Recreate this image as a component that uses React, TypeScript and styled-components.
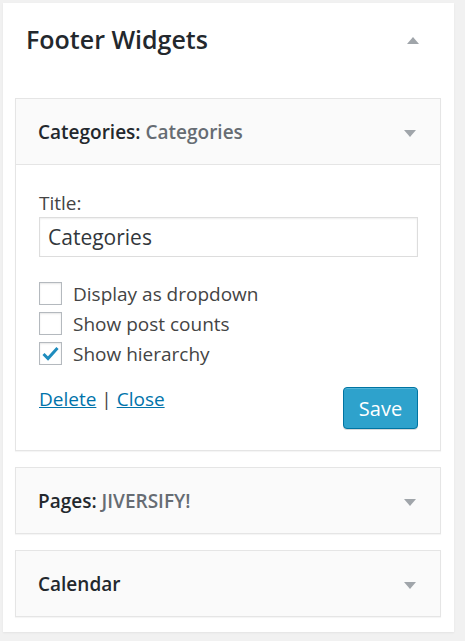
import React from "react";
import styled, { createGlobalStyle } from "styled-components";

const GlobalStyle = createGlobalStyle`
  body {
    margin: 0;
    background: #f1f1f1;
    font-family: "Open Sans", "Liberation Sans", sans-serif;
    color: #444;
  }
`;

type WidgetProps = {
  name: string;
  subtitle?: string;
  open?: boolean;
};

const Arrow = ({ up }: { up?: boolean }) => (
  <ArrowIcon width="12" height="7" viewBox="0 0 12 7">
    <path d={up ? "M0 7 L6 0 L12 7 Z" : "M0 0 L12 0 L6 7 Z"} fill="#a0a5aa" />
  </ArrowIcon>
);

const Check = ({ checked, label }: { checked?: boolean; label: string }) => (
  <CheckRow>
    <Box>
      {checked && (
        <svg width="17" height="15" viewBox="0 0 17 15">
          <path
            d="M1.5 8 L6 12.5 L15.5 2"
            fill="none"
            stroke="#1e8cbe"
            strokeWidth="3"
            strokeLinejoin="miter"
          />
        </svg>
      )}
    </Box>
    <CheckLabel>{label}</CheckLabel>
  </CheckRow>
);

const Widget = ({ name, subtitle, open }: WidgetProps) => (
  <WidgetCard>
    <WidgetTop>
      <WidgetTitle>
        {name}
        {subtitle && <Sub> {subtitle}</Sub>}
      </WidgetTitle>
      <Arrow />
    </WidgetTop>
    {open && (
      <WidgetBody>
        <Label>Title:</Label>
        <Input defaultValue="Categories" />
        <Checks>
          <Check label="Display as dropdown" />
          <Check label="Show post counts" />
          <Check checked label="Show hierarchy" />
        </Checks>
        <Actions>
          <Links>
            <Link href="#">Delete</Link> | <Link href="#">Close</Link>
          </Links>
          <SaveButton>Save</SaveButton>
        </Actions>
      </WidgetBody>
    )}
  </WidgetCard>
);

export default function App() {
  return (
    <>
      <GlobalStyle />
      <Panel>
        <PanelHeader>
          <PanelTitle>Footer Widgets</PanelTitle>
          <Arrow up />
        </PanelHeader>
        <WidgetList>
          <Widget name="Categories:" subtitle="Categories" open />
          <Widget name="Pages:" subtitle="JIVERSIFY!" />
          <Widget name="Calendar" />
        </WidgetList>
      </Panel>
    </>
  );
}

const Panel = styled.div`
  margin: 3px;
  width: 451px;
  height: 629px;
  box-sizing: border-box;
  background: #fff;
  box-shadow: 0 1px 2px rgba(0, 0, 0, 0.06);
`;

const PanelHeader = styled.div`
  height: 95px;
  display: flex;
  align-items: flex-start;
  justify-content: space-between;
  padding: 19px 35px 0 23px;
  box-sizing: border-box;

  svg {
    margin-top: 15px;
  }
`;

const PanelTitle = styled.h2`
  margin: 0;
  font-size: 25px;
  font-weight: 600;
  line-height: 34px;
  color: #23282d;
`;

const ArrowIcon = styled.svg`
  display: block;
  flex: none;
`;

const WidgetList = styled.div`
  display: flex;
  flex-direction: column;
  gap: 16px;
  padding: 0 13px 0 12px;
`;

const WidgetCard = styled.div`
  border: 1px solid #e5e5e5;
  box-shadow: 0 1px 1px rgba(0, 0, 0, 0.04);
  background: #fff;
`;

const WidgetTop = styled.div`
  height: 65px;
  display: flex;
  align-items: center;
  justify-content: space-between;
  padding: 0 24px 0 22px;
  background: #fafafa;

  svg {
    margin-top: 4px;
  }
`;

const WidgetTitle = styled.h3`
  margin: 0;
  font-size: 19px;
  font-weight: 600;
  color: #23282d;
`;

const Sub = styled.span`
  color: #666c73;
`;

const WidgetBody = styled.div`
  border-top: 1px solid #e5e5e5;
  padding: 25px 22px 21px 23px;
`;

const Label = styled.div`
  font-size: 19px;
  line-height: 26px;
  margin-bottom: 1px;
  color: #444;
`;

const Input = styled.input`
  display: block;
  width: 100%;
  height: 40px;
  box-sizing: border-box;
  border: 1px solid #ddd;
  box-shadow: inset 0 1px 2px rgba(0, 0, 0, 0.07);
  padding: 0 8px;
  font-family: "Open Sans", "Liberation Sans", sans-serif;
  font-size: 21px;
  color: #32373c;
  outline: none;
`;

const Checks = styled.div`
  display: flex;
  flex-direction: column;
  gap: 7px;
  margin-top: 25px;
`;

const CheckRow = styled.label`
  display: flex;
  align-items: center;
  gap: 11px;
  height: 23px;
  font-size: 19px;
`;

const Box = styled.span`
  width: 23px;
  height: 23px;
  box-sizing: border-box;
  border: 1px solid #b4b9be;
  background: #fff;
  box-shadow: inset 0 1px 2px rgba(0, 0, 0, 0.1);
  display: flex;
  align-items: center;
  justify-content: center;
  flex: none;
`;

const CheckLabel = styled.span`
  font-size: 19px;
  color: #444;
`;

const Actions = styled.div`
  display: flex;
  justify-content: space-between;
  align-items: flex-start;
  margin-top: 22px;
`;

const Links = styled.div`
  font-size: 19px;
  line-height: 24px;
  color: #444;
`;

const Link = styled.a`
  color: #0073aa;
  text-decoration: underline;
`;

const SaveButton = styled.button`
  width: 75px;
  height: 42px;
  border: 1px solid #0074a2;
  border-radius: 4px;
  background: #2ea2cc;
  color: #fff;
  font-family: "Open Sans", "Liberation Sans", sans-serif;
  font-size: 20px;
  padding: 0;
  box-shadow: inset 0 1px 0 rgba(120, 200, 230, 0.5),
    0 1px 0 rgba(0, 0, 0, 0.15);
  cursor: pointer;
`;
